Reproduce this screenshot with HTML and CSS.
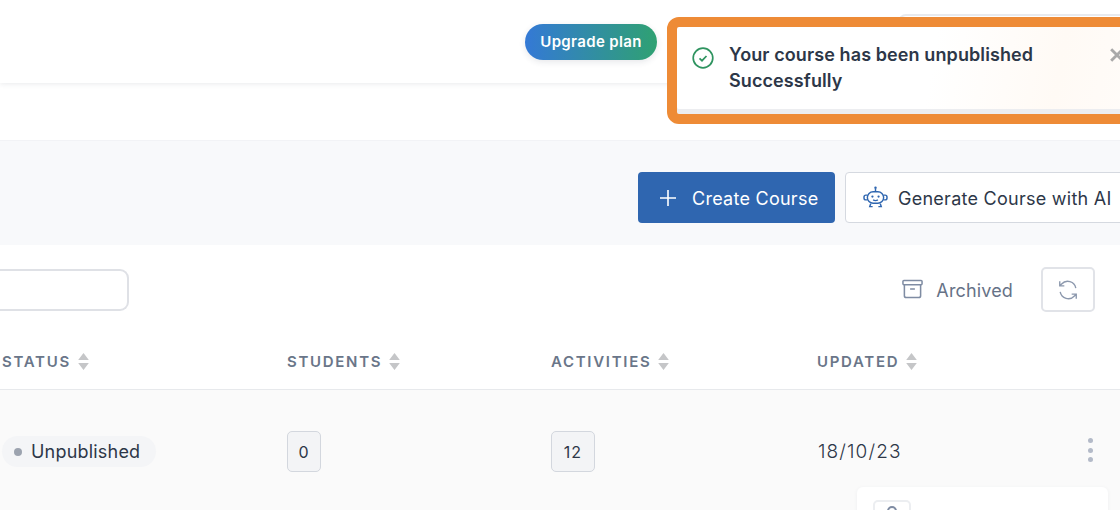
FILE: index.html
```html
<!DOCTYPE html>
<html lang="en">
<head>
<meta charset="utf-8">
<title>Courses</title>
<link rel="stylesheet" href="styles.css">
</head>
<body>
<div class="page">
  <header class="topbar">
    <button class="upgrade">Upgrade plan</button>
    <div class="account"></div>
  </header>
  <div class="strip"></div>
  <section class="band">
    <button class="btn btn-primary">
      <svg class="plus" viewBox="0 0 16 16"><path d="M8 0v16M0 8h16"/></svg>
      <span>Create Course</span>
    </button>
    <button class="btn btn-ghost">
      <svg class="bot" viewBox="0 0 26 24"><circle cx="13" cy="1.800" r="1.300" class="fill"/><path d="M13 3v3"/><rect x="4.500" y="6" width="17" height="12" rx="6"/><path d="M4.500 9.500H3a2 2 0 0 0-2 2v1a2 2 0 0 0 2 2h1.500M21.500 9.500H23a2 2 0 0 1 2 2v1a2 2 0 0 1-2 2h-1.500M8 18.500 7 21.500h3M18 18.500l1 3h-3M10.500 14.500c1.500.9 3.500.9 5 0"/><circle cx="9.800" cy="11" r="1.200" class="fill"/><circle cx="16.200" cy="11" r="1.200" class="fill"/></svg>
      <span>Generate Course with AI</span>
    </button>
  </section>
  <section class="tools">
    <div class="search"></div>
    <div class="tools-right">
      <svg class="archive" viewBox="0 0 22 20"><rect x="1" y="1" width="20" height="4.500" rx="1"/><path d="M2.500 5.500V17a2 2 0 0 0 2 2h13a2 2 0 0 0 2-2V5.500M8.500 10h5"/></svg>
      <span class="archived">Archived</span>
      <button class="refresh">
        <svg viewBox="0 0 24 24"><path d="M20.500 10A9 9 0 0 0 5 5.500L3 7.500M3 2.500v5h5M3.500 14A9 9 0 0 0 19 18.500l2-2M21 21.500v-5h-5"/></svg>
      </button>
    </div>
  </section>
  <div class="thead">
    <div class="th">Status<svg class="sort" viewBox="0 0 10 16"><path d="M5 0l5 6.500H0zM5 16l5-6.500H0z"/></svg></div>
    <div class="th">Students<svg class="sort" viewBox="0 0 10 16"><path d="M5 0l5 6.500H0zM5 16l5-6.500H0z"/></svg></div>
    <div class="th">Activities<svg class="sort" viewBox="0 0 10 16"><path d="M5 0l5 6.500H0zM5 16l5-6.500H0z"/></svg></div>
    <div class="th">Updated<svg class="sort" viewBox="0 0 10 16"><path d="M5 0l5 6.500H0zM5 16l5-6.500H0z"/></svg></div>
  </div>
  <div class="row">
    <div><span class="pill"><i class="dot"></i>Unpublished</span></div>
    <div><span class="count count-one">0</span></div>
    <div><span class="count count-two">12</span></div>
    <div class="date-cell"><span class="date">18/10/23</span><span class="kebab"><i></i><i></i><i></i></span></div>
  </div>

  <div class="menu"><div class="menu-icon"><i></i></div></div>

  <div class="toast">
    <svg class="check" viewBox="0 0 22 22"><circle cx="11" cy="11" r="9.800"/><path d="M7.500 11.300l2.500 2.400 4.500-4.700"/></svg>
    <p>Your course has been unpublished<br>Successfully</p>
    <svg class="close" viewBox="0 0 12 12"><path d="M1 1l10 10M11 1L1 11"/></svg>
  </div>
</div>
</body>
</html>
```
FILE: styles.css
```css
* { box-sizing: border-box; }
html, body { margin: 0; padding: 0; }
body { background: #fff; font-family: Inter, "Liberation Sans", sans-serif; color: #2d3748; }
button { font-family: inherit; cursor: pointer; }

.page { position: relative; width: 1120px; height: 510px; overflow: hidden; background: #fff; }

.topbar {
  height: 83px;
  padding: 14px 0 0 525px;
  display: flex;
  align-items: flex-start;
  gap: 241px;
  background: #fff;
  box-shadow: 0 1px 5px rgba(50, 60, 80, .1);
  position: relative;
}
.upgrade {
  width: 132px; height: 36px; margin-top: 10px; flex: none;
  border: 0; border-radius: 18px;
  background: linear-gradient(90deg, #3479d6, #2fa172);
  color: #fff; font-size: 15px; font-weight: 600; letter-spacing: .35px; padding: 0 0 2px;
  box-shadow: 0 2px 6px rgba(50, 60, 80, .12);
}
.account { width: 300px; height: 50px; flex: none; border: 2px solid #e8eaee; border-radius: 8px; }

.strip { height: 57px; }

.band {
  height: 105px;
  background: #f8f9fb;
  border-top: 1px solid #f2f3f6;
  padding: 31px 0 0 638px;
  display: flex;
  align-items: flex-start;
  gap: 10px;
}
.btn {
  height: 51px; flex: none;
  display: flex; align-items: center;
  border-radius: 4px; font-size: 18px; font-weight: 400; letter-spacing: .26px;
  padding: 0;
}
.btn span { position: relative; top: .5px; }
.btn-primary { width: 197px; background: #2f66b0; color: #fff; border: 0; padding-left: 22px; gap: 16px; }
.plus { width: 16px; height: 16px; fill: none; stroke: #fff; stroke-width: 1.600; }
.btn-ghost { width: 300px; background: #fff; color: #2d3748; border: 1px solid #d5d9e0; padding-left: 17px; gap: 10px; }
.bot { width: 25px; height: 23px; fill: none; stroke: #2f66b0; stroke-width: 1.500; flex: none; }
.bot .fill { fill: #2f66b0; stroke: none; }

.tools { height: 90px; display: flex; align-items: flex-start; justify-content: space-between; padding: 22px 25px 0 0; }
.search { width: 131px; height: 42px; margin: 2px 0 0 -2px; border: 2px solid #dfe1e6; border-left: 0; border-radius: 0 9px 9px 0; }
.tools-right { display: flex; align-items: center; }
.archive { width: 21px; height: 20px; fill: none; stroke: #7f8ca3; stroke-width: 1.600; margin: -2px 13px 0 0; }
.archived { font-size: 18px; color: #667287; margin: 2px 28px 0 0; letter-spacing: .15px; }
.refresh { width: 54px; height: 45px; background: #fff; border: 2px solid #e1e3e8; border-radius: 5px; padding: 0; display: flex; align-items: center; justify-content: center; }
.refresh svg { width: 22px; height: 22px; fill: none; stroke: #8c98ad; stroke-width: 1.500; }

.thead, .row { display: grid; grid-template-columns: 285px 264px 266px 1fr; padding-left: 2px; }
.thead { height: 55px; border-bottom: 1px solid #e7e9ec; padding-top: 16px; }
.th {
  display: flex; align-items: center; gap: 7px; height: 20px;
  font-size: 15px; font-weight: 600; letter-spacing: 1.700px; text-transform: uppercase; color: #6a7689;
}
.sort { width: 11px; height: 17px; fill: #c5c6c8; }

.row { height: 120px; background: #fafafa; padding-top: 40px; }
.row > div { display: flex; align-items: flex-start; }
.pill {
  display: inline-flex; align-items: center; height: 31px; margin-top: 6px; padding: 0 16px 0 12px;
  background: #f4f5f7; border-radius: 16px; font-size: 18px; letter-spacing: .2px; color: #2d3748;
}
.dot { width: 8px; height: 8px; border-radius: 50%; background: #9ca3af; margin-right: 9px; }
.count {
  display: flex; align-items: center; justify-content: center; height: 41px; margin-top: 1px;
  background: #f3f4f6; border: 1.500px solid #d3d7de; border-radius: 5px;
  font-size: 16px; font-weight: 400; letter-spacing: 1px;
}
.count-one { width: 34px; }
.count-two { width: 44px; }
.date-cell { justify-content: space-between; padding: 0 27px 0 1px; }
.date { font-size: 19px; margin-top: 10px; letter-spacing: 1.100px; font-weight: 300; color: #2d3748; }
.kebab { display: flex; flex-direction: column; gap: 4.500px; margin-top: 8px; }
.kebab i { width: 5px; height: 5px; border-radius: 50%; background: #b3bac8; display: block; }

.menu {
  position: absolute; left: 857px; top: 487px; width: 251px; height: 60px;
  background: #fff; border-radius: 6px; box-shadow: 0 1px 4px rgba(50, 60, 80, .06);
  padding: 13px 0 0 16px;
}
.menu-icon { width: 38px; height: 40px; border: 2px solid #eceef1; border-radius: 5px; }
.menu-icon i { display: block; width: 10px; height: 10px; margin: 4px auto 0; border: 2px solid #7f8ca3; border-radius: 50%; }

.toast {
  position: absolute; left: 667px; top: 17px; width: 480px; height: 107px;
  border: 10px solid #ee8b36; border-radius: 12px;
  background: linear-gradient(100deg, #fff 55%, #fffaf5 82%, #fffcf9 100%);
  box-shadow: inset 0 -5px 0 #ecedf0;
  display: flex; align-items: flex-start;
  padding: 15px 0 0 15px;
}
.check { width: 22px; height: 22px; margin: 5px 15px 0 0; flex: none; fill: none; stroke: #2f9460; stroke-width: 1.700; }
.toast p { margin: 0; font-size: 18px; font-weight: 600; line-height: 26px; letter-spacing: .1px; color: #2d3748; width: 381px; flex: none; }
.close { width: 14px; height: 14px; margin-top: 6px; fill: none; stroke: #a9a9a9; stroke-width: 2.500; flex: none; }
```
